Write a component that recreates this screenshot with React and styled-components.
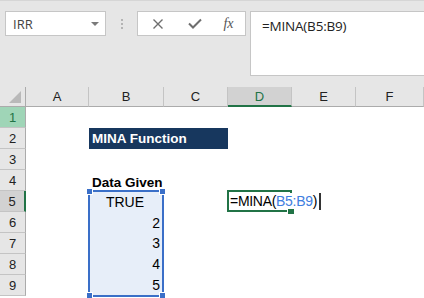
import React from "react";
import styled, { createGlobalStyle } from "styled-components";

const Global = createGlobalStyle`
  html, body { margin: 0; padding: 0; background: #fff; }
  body { width: 424px; height: 298px; overflow: hidden; font-family: "Open Sans", "Liberation Sans", sans-serif; }
`;

const Page = styled.div`
  width: 424px;
  height: 298px;
  display: flex;
  flex-direction: column;
  overflow: hidden;
`;

const FormulaBar = styled.div`
  height: 87px;
  background: #e6e6e6;
  border-top: 1px solid #d6d6d6;
  display: flex;
  align-items: flex-start;
  padding: 10px 0 0 5px;
  box-sizing: border-box;
`;

const NameBox = styled.div`
  width: 101px;
  height: 25px;
  box-sizing: border-box;
  background: #fff;
  border: 1px solid #c6c6c6;
  display: flex;
  align-items: center;
  justify-content: space-between;
  padding: 0 6px 0 7px;
  font-size: 13px;
  color: #444;
`;

const Caret = styled.span`
  width: 0;
  height: 0;
  border-left: 4px solid transparent;
  border-right: 4px solid transparent;
  border-top: 4px solid #7a7a7a;
`;

const Dots = styled.div`
  width: 31px;
  height: 25px;
  display: flex;
  flex-direction: column;
  align-items: center;
  justify-content: center;
  gap: 2px;
  span {
    width: 2px;
    height: 2px;
    background: #b4b4b4;
  }
`;

const ButtonGroup = styled.div`
  width: 109px;
  height: 25px;
  box-sizing: border-box;
  background: #fff;
  border: 1px solid #c6c6c6;
  display: grid;
  grid-template-columns: 40px 34px 1fr;
  align-items: center;
  justify-items: center;
  color: #6e6e6e;
`;

const Fx = styled.span`
  font-family: "Liberation Serif", serif;
  font-style: italic;
  font-size: 14px;
  color: #555;
`;

const FormulaInput = styled.div`
  margin-left: 4px;
  flex: 1;
  height: 65px;
  box-sizing: border-box;
  background: #fff;
  border: 1px solid #c6c6c6;
  border-right: none;
  padding: 5px 0 0 11px;
  font-size: 13.5px;
  letter-spacing: -0.2px;
  color: #222;
`;

const Sheet = styled.div`
  display: grid;
  grid-template-columns: 26px 63px 75px 64px 64px 64px 68px;
  grid-template-rows: 20px repeat(9, 21px);
  background: #fff;
  font-family: "Liberation Sans", "Open Sans", sans-serif;
`;

const Corner = styled.div`
  background: #e6e6e6;
  border-right: 1px solid #ababab;
  border-bottom: 1px solid #ababab;
  box-sizing: border-box;
  position: relative;
  &::after {
    content: "";
    position: absolute;
    right: 4px;
    bottom: 3px;
    width: 0;
    height: 0;
    border-left: 12px solid transparent;
    border-bottom: 12px solid #b9b9b9;
  }
`;

const ColHead = styled.div`
  background: ${(p) => (p.$active ? "#d2d2d2" : "#e6e6e6")};
  border-right: 1px solid #c4c4c4;
  border-bottom: ${(p) => (p.$active ? "2px solid #217346" : "1px solid #ababab")};
  box-sizing: border-box;
  display: flex;
  align-items: center;
  justify-content: center;
  padding-top: ${(p) => (p.$active ? "1px" : "0")};
  font-size: 13px;
  color: ${(p) => (p.$active ? "#217346" : "#222")};
`;

const RowHead = styled.div`
  grid-column: 1;
  background: ${(p) => (p.$green ? "#9fd5b7" : p.$active ? "#d2d2d2" : "#e6e6e6")};
  border-right: ${(p) => (p.$active ? "2px solid #217346" : "1px solid #ababab")};
  border-bottom: 1px solid #c4c4c4;
  box-sizing: border-box;
  display: flex;
  align-items: center;
  justify-content: center;
  font-size: 13px;
  color: ${(p) => (p.$green ? "#217346" : "#222")};
`;

const TitleCell = styled.div`
  grid-column: 3 / 5;
  grid-row: 3;
  background: #17375e;
  color: #fff;
  font-weight: bold;
  font-size: 13.5px;
  display: flex;
  align-items: center;
  padding-left: 3px;
`;

const BoldCell = styled.div`
  grid-column: 3;
  grid-row: 5;
  font-weight: bold;
  font-size: 13.5px;
  display: flex;
  align-items: flex-end;
  padding: 0 0 1px 3px;
  color: #000;
`;

const Selection = styled.div`
  grid-column: 3;
  grid-row: 6 / 11;
  position: relative;
  background: #e7eef9;
  border: 2px solid #3a6fc8;
  margin: -1px 0 -1px -1px;
  display: grid;
  grid-template-rows: repeat(5, 1fr);
  padding-right: 2px;
`;

const Handle = styled.span`
  position: absolute;
  width: 5px;
  height: 5px;
  background: #3a6fc8;
  border: 1px solid #fff;
  ${(p) => (p.$top ? "top: -4px;" : "bottom: -4px;")}
  ${(p) => (p.$left ? "left: -4px;" : "right: -4px;")}
`;

const Value = styled.div`
  display: flex;
  align-items: center;
  justify-content: ${(p) => (p.$center ? "center" : "flex-end")};
  font-size: 14px;
  color: #000;
`;

const ActiveCell = styled.div`
  grid-column: 5;
  grid-row: 6;
  position: relative;
  border: 2px solid #217346;
  margin: -1px 0 0 -1px;
  display: flex;
  align-items: center;
  padding-left: 1px;
  white-space: nowrap;
  overflow: visible;
  z-index: 1;
`;

const CellText = styled.span`
  background: #fff;
  font-size: 14px;
  letter-spacing: -0.3px;
  color: #000;
  line-height: 17px;
  display: flex;
  align-items: center;
`;

const FillHandle = styled.span`
  position: absolute;
  right: -4px;
  bottom: -4px;
  width: 6px;
  height: 5px;
  background: #217346;
  border-left: 1px solid #fff;
  border-top: 1px solid #fff;
`;

const Ref = styled.span`
  color: #3f7ee0;
`;

const Cursor = styled.span`
  display: inline-block;
  width: 2px;
  height: 17px;
  background: #333;
  margin-left: 2px;
`;

const cols = ["A", "B", "C", "D", "E", "F"];

export default function App() {
  return (
    <Page>
      <Global />
      <FormulaBar>
        <NameBox>
          IRR
          <Caret />
        </NameBox>
        <Dots>
          <span />
          <span />
          <span />
        </Dots>
        <ButtonGroup>
          <svg width="12" height="12" viewBox="0 0 12 12">
            <path d="M1.5 1.5 L10.5 10.5 M10.5 1.5 L1.5 10.5" stroke="#6e6e6e" strokeWidth="1.4" fill="none" />
          </svg>
          <svg width="14" height="11" viewBox="0 0 14 11">
            <path d="M1 5.5 L5 9.5 L13 1.5" stroke="#6e6e6e" strokeWidth="2" fill="none" />
          </svg>
          <Fx>fx</Fx>
        </ButtonGroup>
        <FormulaInput>=MINA(B5:B9)</FormulaInput>
      </FormulaBar>
      <Sheet>
        <Corner />
        {cols.map((c) => (
          <ColHead key={c} $active={c === "D"}>
            {c}
          </ColHead>
        ))}
        {[1, 2, 3, 4, 5, 6, 7, 8, 9].map((r) => (
          <RowHead key={r} style={{ gridRow: r + 1 }} $green={r === 1} $active={r === 5}>
            {r}
          </RowHead>
        ))}
        <TitleCell>MINA Function</TitleCell>
        <BoldCell>Data Given</BoldCell>
        <Selection>
          <Handle $top $left />
          <Handle $top />
          <Handle $left />
          <Handle />
          <Value $center>TRUE</Value>
          <Value>2</Value>
          <Value>3</Value>
          <Value>4</Value>
          <Value>5</Value>
        </Selection>
        <ActiveCell>
          <CellText>
            =MINA(<Ref>B5:B9</Ref>)<Cursor />
          </CellText>
          <FillHandle />
        </ActiveCell>
      </Sheet>
    </Page>
  );
}
